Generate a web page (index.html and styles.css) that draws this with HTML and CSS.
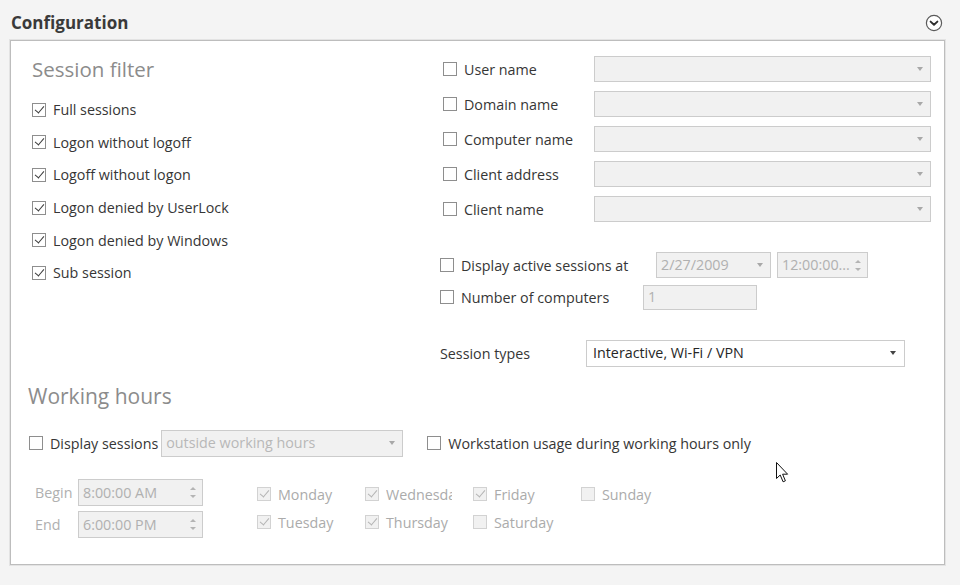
FILE: index.html
```html
<!DOCTYPE html>
<html>
<head>
<meta charset="utf-8">
<link rel="stylesheet" href="styles.css">
</head>
<body>
<div class="page">
  <div class="header">
    <span class="title">Configuration</span>
    <svg class="collapse" width="20" height="20" viewBox="0 0 20 20">
      <circle cx="10" cy="10" r="7.6" fill="#fff" stroke="#5a5a5a" stroke-width="1.2"/>
      <path d="M6.6 8.6 L10 11.8 L13.4 8.6" fill="none" stroke="#2e2e2e" stroke-width="1.9" stroke-linecap="round" stroke-linejoin="round"/>
    </svg>
  </div>
  <div class="panel">
    <div class="top">
      <div class="col-left">
        <div class="section-title">Session filter</div>
        <div class="check-list">
          <div class="check-row"><span class="cb on"></span><span>Full sessions</span></div>
          <div class="check-row"><span class="cb on"></span><span>Logon without logoff</span></div>
          <div class="check-row"><span class="cb on"></span><span>Logoff without logon</span></div>
          <div class="check-row"><span class="cb on"></span><span>Logon denied by UserLock</span></div>
          <div class="check-row"><span class="cb on"></span><span>Logon denied by Windows</span></div>
          <div class="check-row"><span class="cb on"></span><span>Sub session</span></div>
        </div>
      </div>
      <div class="col-right">
        <div class="field-row"><div class="field-label"><span class="cb"></span><span>User name</span></div><div class="combo dis"><span class="arrow"></span></div></div>
        <div class="field-row"><div class="field-label"><span class="cb"></span><span>Domain name</span></div><div class="combo dis"><span class="arrow"></span></div></div>
        <div class="field-row"><div class="field-label"><span class="cb"></span><span>Computer name</span></div><div class="combo dis"><span class="arrow"></span></div></div>
        <div class="field-row"><div class="field-label"><span class="cb"></span><span>Client address</span></div><div class="combo dis"><span class="arrow"></span></div></div>
        <div class="field-row"><div class="field-label"><span class="cb"></span><span>Client name</span></div><div class="combo dis"><span class="arrow"></span></div></div>

        <div class="active-row">
          <div class="active-label"><span class="cb"></span><span>Display active sessions at</span></div>
          <div class="box dis date-box"><span class="box-text">2/27/2009</span><span class="arrow"></span></div>
          <div class="box dis time-box"><span class="box-text">12:00:00...</span><span class="spin"><span class="up"></span><span class="down"></span></span></div>
        </div>
        <div class="number-row">
          <div class="number-label"><span class="cb"></span><span>Number of computers</span></div>
          <div class="box dis num-box"><span class="box-text">1</span></div>
        </div>
        <div class="types-row">
          <div class="types-label">Session types</div>
          <div class="box types-box"><span class="box-text">Interactive, Wi-Fi / VPN</span><span class="arrow dark"></span></div>
        </div>
      </div>
    </div>

    <div class="wh">
      <div class="section-title wh-title">Working hours</div>
      <div class="display-row">
        <span class="cb"></span><span class="display-label">Display sessions</span>
        <div class="box dis outside-box"><span class="box-text">outside working hours</span><span class="arrow"></span></div>
        <span class="cb ws-cb"></span><span>Workstation usage during working hours only</span>
      </div>
      <div class="hours">
        <div class="times">
          <div class="time-row"><span class="time-label">Begin</span><div class="box dis hour-box"><span class="box-text">8:00:00 AM</span><span class="spin"><span class="up"></span><span class="down"></span></span></div></div>
          <div class="time-row"><span class="time-label">End</span><div class="box dis hour-box"><span class="box-text">6:00:00 PM</span><span class="spin"><span class="up"></span><span class="down"></span></span></div></div>
        </div>
        <div class="days">
          <div class="day"><span class="cb on dis"></span><span>Monday</span></div>
          <div class="day"><span class="cb on dis"></span><span>Tuesday</span></div>
          <div class="day"><span class="cb on dis"></span><span class="clip">Wednesday</span></div>
          <div class="day"><span class="cb on dis"></span><span>Thursday</span></div>
          <div class="day"><span class="cb on dis"></span><span>Friday</span></div>
          <div class="day"><span class="cb dis"></span><span>Saturday</span></div>
          <div class="day"><span class="cb dis"></span><span>Sunday</span></div>
        </div>
      </div>
    </div>
  </div>
  <svg class="cursor" width="15" height="24" viewBox="0 0 15 24">
    <path d="M1.5 1.5 L1.5 17.5 L5.2 14 L8.1 20.8 L10.4 19.8 L7.6 13.2 L12.6 13.2 Z" fill="#fff" stroke="#111" stroke-width="1" stroke-linejoin="round"/>
  </svg>
</div>
</body>
</html>
```

FILE: styles.css
```css
* { box-sizing: border-box; }

html, body {
  margin: 0;
  padding: 0;
  background: #f4f4f4;
}

body {
  font-family: "Open Sans", "Noto Sans", "Liberation Sans", sans-serif;
  font-size: 14.3px;
  color: #363636;
}

.page {
  position: relative;
  width: 960px;
  height: 585px;
  overflow: hidden;
}

.header {
  height: 40px;
  padding: 11px 16px 0 11px;
  display: flex;
  justify-content: space-between;
  align-items: flex-start;
}

.title {
  font-size: 17px;
  font-weight: 700;
  line-height: 24px;
  color: #3a3a3a;
}

.collapse {
  margin-top: 2px;
}

.panel {
  margin-left: 10px;
  width: 935px;
  height: 525px;
  background: #fff;
  border: 1px solid #bdbdbd;
  box-shadow: 0 0 0 1px #e3e3e3;
}

.top {
  display: flex;
  height: 339px;
}

.col-left {
  width: 429px;
  padding-left: 21px;
}

.section-title {
  font-size: 20.5px;
  font-weight: 400;
  line-height: 28px;
  color: #8c8c8c;
  margin-top: 14px;
}

.check-list {
  padding-top: 10.5px;
}

.check-row {
  height: 32.6px;
  display: flex;
  align-items: center;
}

.cb {
  position: relative;
  flex: none;
  width: 14px;
  height: 14px;
  border: 1px solid #8e8e8e;
  background: #fff;
  margin-right: 7px;
}

.cb.on::after {
  content: "";
  position: absolute;
  left: 4px;
  top: 0px;
  width: 4px;
  height: 8px;
  border-right: 1.6px solid #3a3a3a;
  border-bottom: 1.6px solid #3a3a3a;
  transform: rotate(40deg);
}

.cb.dis {
  border-color: #d2d2d2;
}

.cb.dis.on::after {
  border-color: #b4b4b4;
}

.col-right {
  flex: 1;
  padding-top: 10.5px;
}

.field-row {
  height: 35px;
  display: flex;
  align-items: center;
}

.field-label {
  width: 154px;
  padding-left: 3px;
  display: flex;
  align-items: center;
}

.combo {
  width: 337px;
  height: 26px;
  border: 1px solid #cccccc;
  display: flex;
  align-items: center;
  justify-content: flex-end;
  padding-right: 7px;
}

.dis {
  background: #f1f1f1;
  color: #b0b0b0;
}

.arrow {
  width: 0;
  height: 0;
  border-left: 3.5px solid transparent;
  border-right: 3.5px solid transparent;
  border-top: 4px solid #a8a8a8;
}

.arrow.dark {
  border-top-color: #444;
}

.box {
  height: 26px;
  border: 1px solid #cccccc;
  display: flex;
  align-items: center;
  justify-content: space-between;
  padding: 0 7px 0 4px;
  white-space: nowrap;
  overflow: hidden;
}

.box-text {
  line-height: 20px;
}

.spin {
  display: flex;
  flex-direction: column;
  gap: 5px;
  margin-right: -1px;
}

.spin .up {
  width: 0;
  height: 0;
  border-left: 3px solid transparent;
  border-right: 3px solid transparent;
  border-bottom: 3.5px solid #b4b4b4;
}

.spin .down {
  width: 0;
  height: 0;
  border-left: 3px solid transparent;
  border-right: 3px solid transparent;
  border-top: 3.5px solid #b4b4b4;
}

.active-row {
  margin-top: 22.5px;
  height: 32px;
  display: flex;
  align-items: center;
}

.active-label {
  width: 216px;
  display: flex;
  align-items: center;
}

.date-box {
  width: 115px;
}

.time-box {
  width: 91px;
  margin-left: 6px;
}

.number-row {
  height: 32px;
  display: flex;
  align-items: center;
}

.number-label {
  width: 203px;
  display: flex;
  align-items: center;
}

.num-box {
  width: 114px;
  height: 25px;
}

.types-row {
  margin-top: 24px;
  height: 32px;
  display: flex;
  align-items: center;
}

.types-label {
  width: 146px;
}

.types-box {
  width: 319px;
  height: 27px;
  background: #fff;
  color: #262626;
  padding-left: 6px;
  padding-right: 8px;
}

.wh {
  padding-left: 17px;
}

.wh-title {
  margin-top: 0;
  line-height: 32px;
  font-size: 21px;
}

.display-row {
  margin-top: 17px;
  height: 28px;
  display: flex;
  align-items: center;
  padding-left: 1px;
}

.display-label {
  margin-right: 3px;
}

.outside-box {
  width: 242px;
  height: 27px;
  color: #b8b8b8;
}

.ws-cb {
  margin-left: 24px;
}

.hours {
  margin-top: 22px;
  display: flex;
}

.times {
  padding-left: 7px;
  width: 229px;
}

.time-row {
  height: 32px;
  display: flex;
  align-items: flex-start;
  color: #b0b0b0;
}

.time-label {
  width: 43px;
  line-height: 28px;
}

.hour-box {
  width: 125px;
  height: 27px;
  padding-right: 7px;
}

.days {
  display: grid;
  grid-template-rows: 28px 28px;
  grid-auto-flow: column;
  grid-auto-columns: 108px;
  color: #ababab;
  margin-top: 1px;
}

.day {
  display: flex;
  align-items: center;
  white-space: nowrap;
}

.clip {
  width: 66px;
  overflow: hidden;
}

.cursor {
  position: absolute;
  left: 775px;
  top: 461px;
}
```
